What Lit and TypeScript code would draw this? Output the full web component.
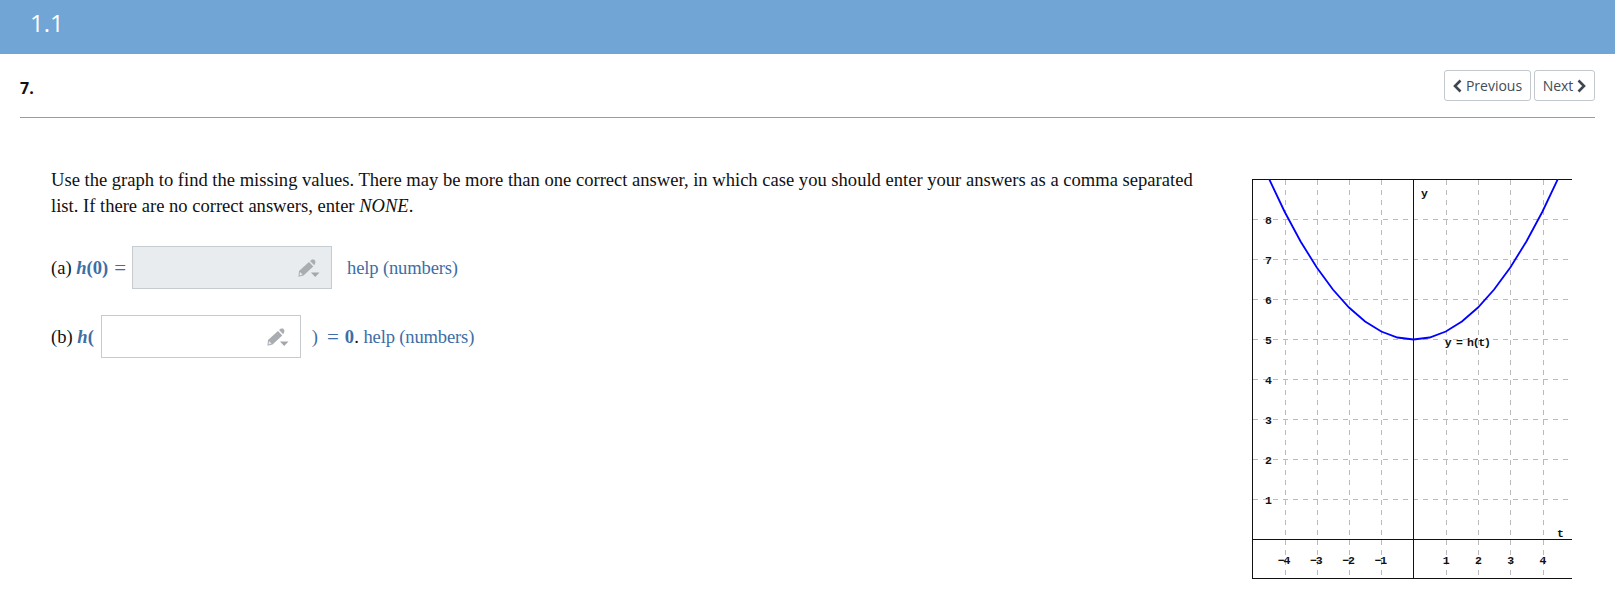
import { LitElement, html, css, svg } from "lit";
import { customElement } from "lit/decorators.js";

const X0 = 1413.5 - 1252, Y0 = 539.5 - 179, DX = 32.25, DY = 40;
const px = (t: number) => X0 + t * DX;
const py = (v: number) => Y0 - v * DY;

const curve = () => {
  const pts: string[] = [];
  for (let t = -4.5; t <= 4.501; t += 0.5) {
    const v = 5 + (t * t) / 5;
    pts.push(`${px(t).toFixed(1)},${py(v).toFixed(1)}`);
  }
  return pts.join(" ");
};

const xs = [-4, -3, -2, -1, 1, 2, 3, 4];
const ys = [1, 2, 3, 4, 5, 6, 7, 8];

const pencil = html`<svg class="pencil" width="22" height="18" viewBox="0 0 22 18" aria-hidden="true">
  <path d="M1 12 L11 3 L15.3 7.5 L5.5 16.5 L.5 17.7 Z" fill="#a9adb1"/>
  <path d="M12 2 L14 .6 L16 .6 L17.3 2 L17.3 4 L16.2 6.3 Z" fill="#a9adb1"/>
  <path d="M2 13 L4.5 15.5 L1.5 16.5 Z" fill="#e9ecef"/>
  <path d="M13 13.5 L21.5 13.5 L17.2 18 Z" fill="#a3a7ab"/>
</svg>`;

@customElement("app-root")
export class AppRoot extends LitElement {
  static styles = css`
    :host { display: block; width: 1615px; height: 604px; background: #fff; overflow: hidden; color: #111; }
    .banner { height: 54px; box-sizing: border-box; background: #71a5d5; color: #fff; font: 400 24px/46px "Open Sans", sans-serif; padding-left: 30px; }
    .head { margin: 0 20px; height: 64px; box-sizing: border-box; border-bottom: 1px solid #71a5d5; display: flex; justify-content: space-between; padding-top: 16px; }
    .num { font: 700 16px/36px "Open Sans", sans-serif; color: #111; }
    .nav { display: flex; gap: 3px; }
    .btn { height: 31px; box-sizing: border-box; border: 1px solid #c3c8ce; border-radius: 3px; background: #fff; color: #444b55; font: 400 14px/29px "Open Sans", sans-serif; display: flex; align-items: center; gap: 4px; justify-content: center; padding: 0; }
    .prev { width: 87px; }
    .next { width: 61px; }
    .body { display: flex; justify-content: space-between; padding: 49px 20px 0 51px; }
    .q { font: 400 18.57px/26px "Liberation Serif", serif; color: #111; }
    .intro { margin: 0; white-space: nowrap; }
    .row { display: flex; align-items: center; height: 43px; margin-top: 26px; white-space: pre; }
    .row.first { margin-top: 27px; }
    .math { color: #3d6ea6; }
    .math i { font-weight: 700; }
    .math b { font-weight: 700; }
    .eq { font-size: 21px; line-height: 20px; }
    .eq.a { margin: 0 6px 0 6px; }
    .eq.b { margin: 0 6px 0 9px; }
    .lnk { color: #3d6ea6; letter-spacing: -0.15px; }
    .ans { box-sizing: border-box; width: 200px; height: 43px; border: 1px solid #c8cbcd; background: #fff; display: flex; align-items: center; justify-content: flex-end; padding-right: 11px; }
    .ans.off { background: #e9ecef; margin-right: 15px; }
    .ans.on { margin-left: 7px; margin-right: 11px; }
    .plot { display: block; margin-right: 23px; margin-top: 12px; }
    .plot text { font: 700 11.5px "Liberation Mono", monospace; letter-spacing: -1.3px; fill: #111; }
  `;

  render() {
    return html`
      <div class="banner">1.1</div>
      <div class="head">
        <div class="num">7.</div>
        <div class="nav">
          <button class="btn prev">
            <svg width="9" height="14" viewBox="0 0 9 14"><path d="M7.5 1.5 L2 7 L7.5 12.5" fill="none" stroke="#3f4650" stroke-width="2.6"/></svg>
            Previous
          </button>
          <button class="btn next">
            Next
            <svg width="9" height="14" viewBox="0 0 9 14"><path d="M1.5 1.5 L7 7 L1.5 12.5" fill="none" stroke="#3f4650" stroke-width="2.6"/></svg>
          </button>
        </div>
      </div>
      <div class="body">
        <div class="q">
          <p class="intro">Use the graph to find the missing values. There may be more than one correct answer, in which case you should enter your answers as a comma separated<br />list. If there are no correct answers, enter <i>NONE</i>.</p>
          <div class="row first">
            <span>(a) </span><span class="math"><i>h</i><b>(0)</b></span><span class="math eq a">=</span>
            <div class="ans off">${pencil}</div>
            <span class="lnk">help (numbers)</span>
          </div>
          <div class="row">
            <span>(b) </span><span class="math"><i>h</i><b>(</b></span>
            <div class="ans on">${pencil}</div>
            <span class="math">)</span><span class="math eq b">=</span><span class="math"><b>0</b></span><span>. </span><span class="lnk">help (numbers)</span>
          </div>
        </div>
        <svg class="plot" width="320" height="400" viewBox="0 0 320 400">
          <g stroke="#bbb" stroke-width="1" stroke-dasharray="5 5" fill="none" shape-rendering="crispEdges">
            ${xs.map((t) => svg`<line x1=${Math.round(px(t)) + 0.5} y1="1" x2=${Math.round(px(t)) + 0.5} y2="399"/>`)}
            ${ys.map((v) => svg`<line x1="1" y1=${py(v)} x2="320" y2=${py(v)}/>`)}
          </g>
          <g stroke="#111" stroke-width="1" fill="none" shape-rendering="crispEdges">
            <path d="M320 .5 H.5 V399.5 H320"/>
            <line x1="0" y1=${Y0} x2="320" y2=${Y0}/>
            <line x1=${X0} y1="0" x2=${X0} y2="400"/>
          </g>
          <polyline points=${curve()} fill="none" stroke="#0000ff" stroke-width="1.8" />
          ${ys.map((v) => svg`<text x="13" y=${py(v) + 4}>${v}</text>`)}
          ${xs.map((t) => svg`<text x=${px(t) - (t < 0 ? 6.5 : 3)} y="385">${t < 0 ? "−" + -t : t}</text>`)}
          <text x="169" y="18">y</text>
          <text x="192.7" y="167">y = h(t)</text>
          <text x="305" y="357.5">t</text>
        </svg>
      </div>
    `;
  }
}
